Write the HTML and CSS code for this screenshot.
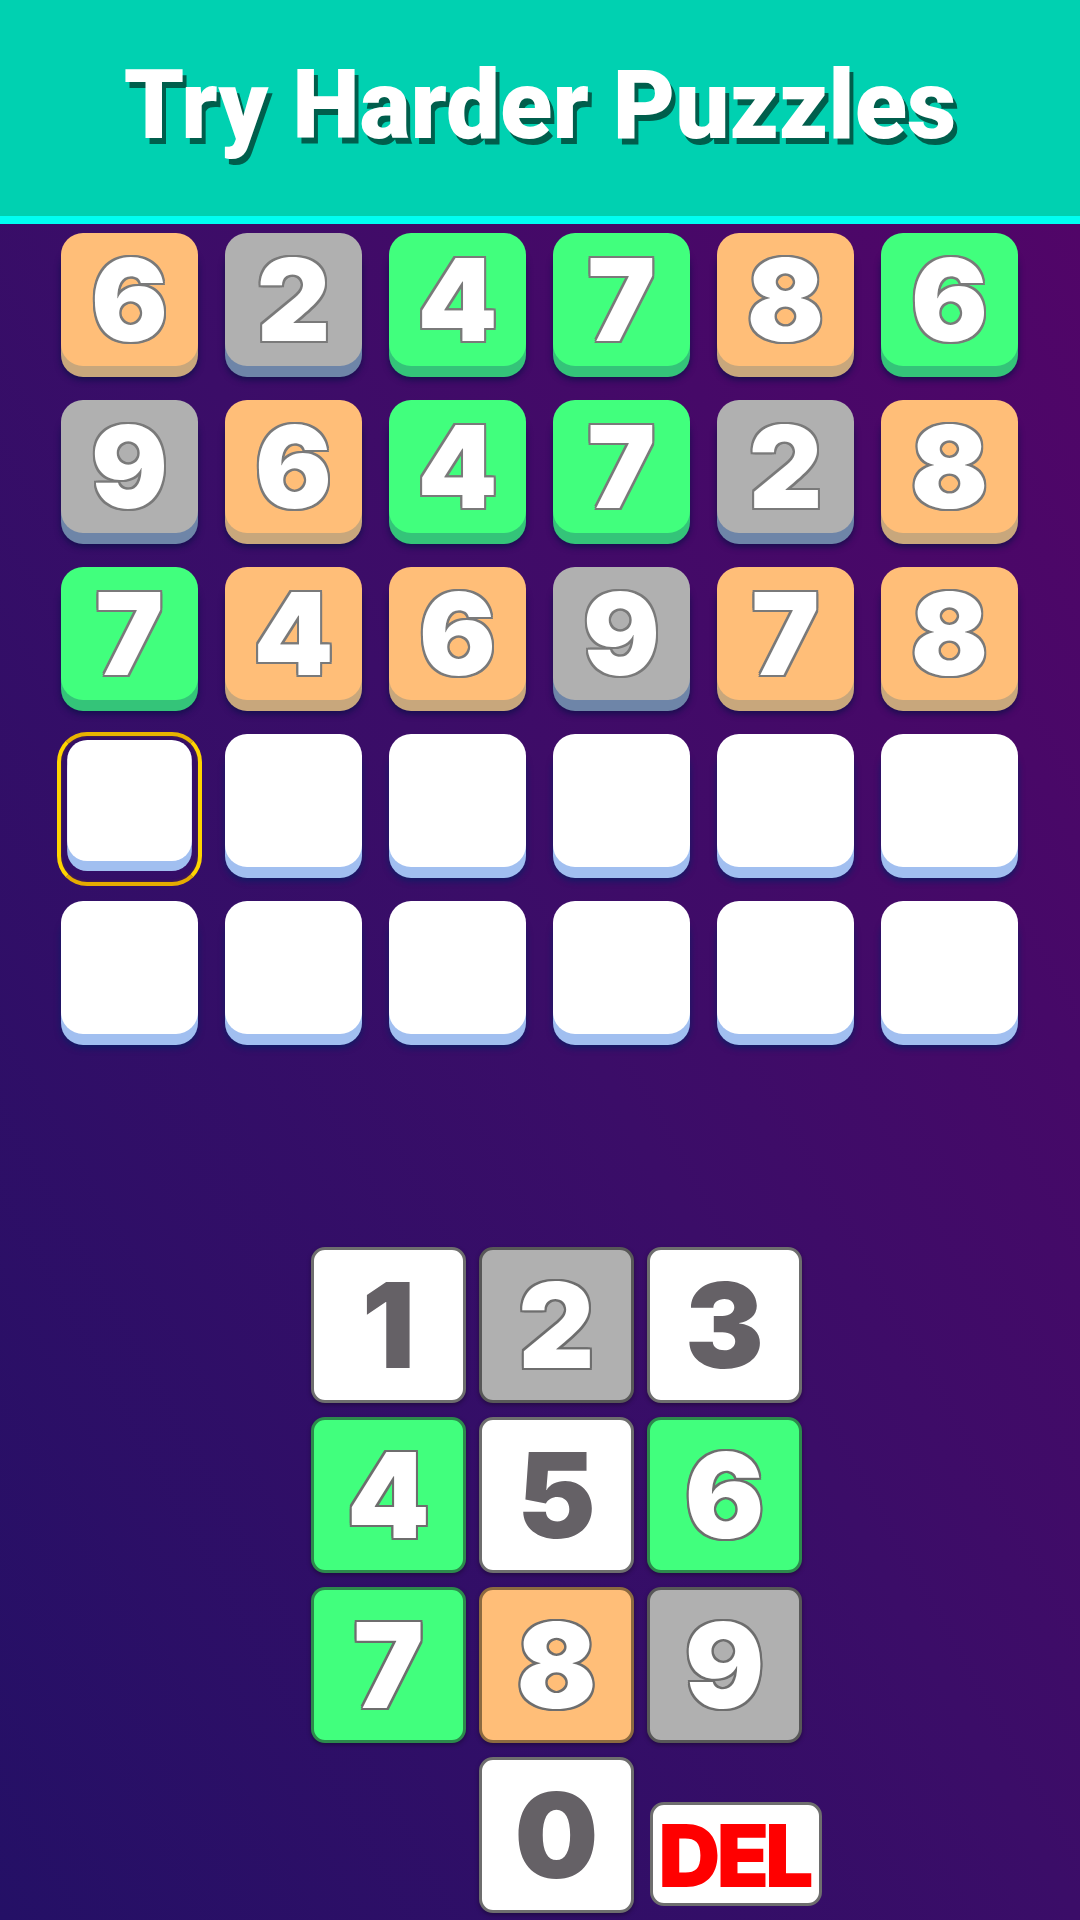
FILE: index.html
```html
<!DOCTYPE html>
<html>
<head>
<meta charset="utf-8">
<link rel="stylesheet" href="styles.css">
</head>
<body>
<header class="top">
  <h1 class="title">Try Harder Puzzles</h1>
</header>
<div class="stripe"></div>
<main class="board">
  <div class="tile orange">6</div>
  <div class="tile gray">2</div>
  <div class="tile green">4</div>
  <div class="tile green">7</div>
  <div class="tile orange">8</div>
  <div class="tile green">6</div>

  <div class="tile gray">9</div>
  <div class="tile orange">6</div>
  <div class="tile green">4</div>
  <div class="tile green">7</div>
  <div class="tile gray">2</div>
  <div class="tile orange">8</div>

  <div class="tile green">7</div>
  <div class="tile orange">4</div>
  <div class="tile orange">6</div>
  <div class="tile gray">9</div>
  <div class="tile orange">7</div>
  <div class="tile orange">8</div>

  <div class="slot"><div class="tile white small"></div></div>
  <div class="tile white"></div>
  <div class="tile white"></div>
  <div class="tile white"></div>
  <div class="tile white"></div>
  <div class="tile white"></div>

  <div class="tile white"></div>
  <div class="tile white"></div>
  <div class="tile white"></div>
  <div class="tile white"></div>
  <div class="tile white"></div>
  <div class="tile white"></div>
</main>
<section class="keypad">
  <div class="key k-white">1</div>
  <div class="key k-gray">2</div>
  <div class="key k-white">3</div>
  <div class="key k-green">4</div>
  <div class="key k-white">5</div>
  <div class="key k-green">6</div>
  <div class="key k-green">7</div>
  <div class="key k-orange">8</div>
  <div class="key k-gray">9</div>
  <div class="key k-white k-zero">0</div>
  <div class="del">DEL</div>
</section>
</body>
</html>
```
FILE: styles.css
```css
html, body {
  margin: 0;
  padding: 0;
}
body {
  width: 1080px;
  height: 1920px;
  overflow: hidden;
  background: linear-gradient(to top right, #241066 0%, #3b0d68 50%, #540468 100%);
  font-family: "Inter", "Liberation Sans", sans-serif;
}
.top {
  height: 216px;
  background: #00d1b1;
  display: flex;
  align-items: center;
  justify-content: center;
  padding-bottom: 6px;
  box-sizing: border-box;
}
.title {
  margin: 0;
  color: #ffffff;
  font-family: "Roboto", "Liberation Sans", sans-serif;
  font-weight: 900;
  font-size: 96px;
  letter-spacing: 0;
  line-height: 1;
  text-shadow: 4px 6px 0 #005e4c;
}
.stripe {
  height: 8px;
  background: #00fff2;
}
.board {
  display: grid;
  grid-template-columns: repeat(6, 137px);
  grid-auto-rows: 133px;
  column-gap: 27px;
  row-gap: 34px;
  padding: 9px 0 0 61px;
}
.tile {
  width: 137px;
  height: 133px;
  border-radius: 22px;
  display: flex;
  align-items: center;
  justify-content: center;
  font-family: "Inter", "Liberation Sans", sans-serif;
  font-weight: 900;
  font-size: 114px;
  line-height: 1;
  color: #ffffff;
  text-shadow:
    2px 0 0 #7a7a7a, -2px 0 0 #7a7a7a, 0 2px 0 #7a7a7a, 0 -2px 0 #7a7a7a,
    2px 2px 0 #7a7a7a, -2px -2px 0 #7a7a7a, 2px -2px 0 #7a7a7a, -2px 2px 0 #7a7a7a;
}
.orange {
  background: #ffbe78;
  box-shadow: 0 11px 0 #c8a77c, 0 14px 6px rgba(8, 16, 70, 0.75);
}
.gray {
  background: #b0b0b0;
  box-shadow: 0 11px 0 #6e85a8, 0 14px 6px rgba(8, 16, 70, 0.75);
}
.green {
  background: #41ff7d;
  box-shadow: 0 11px 0 #34c479, 0 14px 6px rgba(8, 16, 70, 0.75);
}
.white {
  background: #ffffff;
  box-shadow: 0 11px 0 #a1bff0, 0 14px 6px rgba(8, 30, 100, 0.85);
}
.slot {
  position: relative;
  width: 137px;
  height: 133px;
}
.slot::after {
  content: "";
  position: absolute;
  top: -2px;
  left: -4px;
  right: -4px;
  bottom: -19px;
  border: 4px solid #ffd400;
  border-top-color: #e8b400;
  border-bottom-color: #e6ac00;
  border-radius: 30px;
  box-sizing: border-box;
  box-shadow: inset 0 0 3px rgba(120, 80, 0, 0.6);
}
.tile.small {
  transform: scale(0.91);
  box-shadow: 0 11px 0 #a1bff0;
}
.keypad {
  display: grid;
  grid-template-columns: repeat(3, 155px);
  grid-auto-rows: 156px;
  column-gap: 13px;
  row-gap: 14px;
  margin-top: 213px;
  padding-left: 311px;
}
.key {
  box-sizing: border-box;
  border-radius: 14px;
  border: 3px solid #6e6e6e;
  display: flex;
  align-items: center;
  justify-content: center;
  font-family: "Inter", "Liberation Sans", sans-serif;
  font-weight: 900;
  font-size: 118px;
  line-height: 1;
  color: #ffffff;
  box-shadow: 0 2px 4px rgba(0, 0, 0, 0.35);
  text-shadow:
    2px 0 0 #6e6e6e, -2px 0 0 #6e6e6e, 0 2px 0 #6e6e6e, 0 -2px 0 #6e6e6e,
    2px 2px 0 #6e6e6e, -2px -2px 0 #6e6e6e, 2px -2px 0 #6e6e6e, -2px 2px 0 #6e6e6e;
}
.k-white {
  background: #ffffff;
  color: #656166;
  text-shadow: none;
}
.k-gray {
  background: #b0b0b0;
  border-color: #585858;
}
.k-green {
  background: #41ff7d;
  border-color: #2c8a4c;
}
.k-orange {
  background: #ffbe78;
  border-color: #8c6a40;
}
.k-zero {
  grid-column: 2;
}
.del {
  box-sizing: border-box;
  width: 172px;
  height: 104px;
  align-self: end;
  margin: 0 0 7px 3px;
  background: #ffffff;
  border: 3px solid #6e6e6e;
  border-radius: 14px;
  display: flex;
  align-items: center;
  justify-content: center;
  color: #ff0000;
  font-family: "Inter", "Liberation Sans", sans-serif;
  font-weight: 900;
  font-size: 86px;
  letter-spacing: -4px;
  line-height: 1;
  padding: 4px 4px 0 0;
}
```
